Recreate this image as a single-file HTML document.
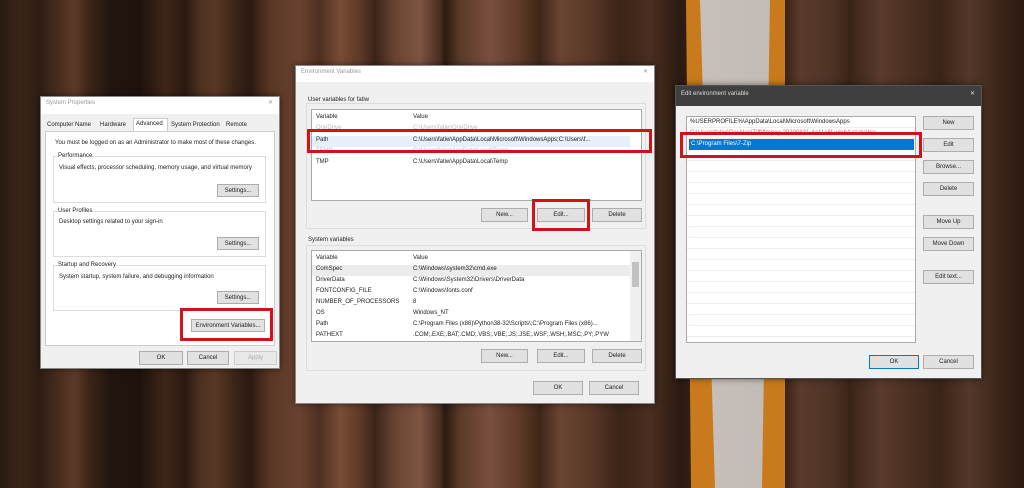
<!DOCTYPE html>
<html><head><meta charset="utf-8"><style>
*{box-sizing:border-box;margin:0;padding:0}
body{width:1024px;height:488px;overflow:hidden;position:relative;font-family:"Liberation Sans",sans-serif;font-size:6px;color:#222;
background:
linear-gradient(90deg,#2a1a12 0,#3a2418 20px,#2e1d14 40px,#4a2e20 60px,#5e3a28 75px,#3a2418 90px,#221510 110px,#1e120c 140px,#3e2618 165px,#2a1a12 185px,#4e3020 200px,#5a3826 215px,#3a2418 235px,#2a1a12 250px,#5a3624 270px,#6a4230 300px,#4e3020 320px,#7a4c36 340px,#5e3a28 360px,#3a2418 375px,#6a4432 395px,#7e5442 420px,#4a2e20 440px,#2a1a12 445px,#5a3a28 460px,#7a5040 490px,#5e3a28 520px,#3e2618 540px,#6a4432 560px,#5a3826 590px,#3a2418 620px,#4a2e20 650px,#2a1a12 680px,#3a2418 700px,
#3a2418 785px,#5a3a2c 800px,#4e3426 830px,#3a2418 850px,#5a3a2c 880px,#4a3022 910px,#3a2418 940px,#54382a 970px,#3a2418 1000px,#2a1a12 1024px);}
.a{position:absolute}
.dlg{position:absolute;background:#f0f0f0;border:1px solid #888;box-shadow:0 0 6px rgba(0,0,0,.5)}
.tb{position:absolute;left:0;right:0;top:0;background:#fff;color:#999;padding:3px 5px;font-size:6px}
.btn{position:absolute;background:#e1e1e1;border:1px solid #adadad;text-align:center;font-size:6px;line-height:12px;color:#222;white-space:nowrap}
.white{position:absolute;background:#fff;border:1px solid #aaa}
.grp{position:absolute;border:1px solid #dcdcdc}
.red{position:absolute;border:3px solid #d0121b}
.t{position:absolute;white-space:nowrap}
</style></head><body>
<div class="a" style="left:0;top:0;width:1024px;height:488px;background:#c97a1c;clip-path:polygon(686px 0,785px 0,785px 488px,691px 488px)"></div>
<div class="a" style="left:0;top:0;width:1024px;height:488px;background:linear-gradient(90deg,#b8b0aa,#d2ccc6,#b4aca6);clip-path:polygon(700px 0,770px 0,762px 488px,715px 488px)"></div>

<!-- System properties -->
<div class="dlg" style="left:40px;top:96px;width:240px;height:273px">
<div class="tb" style="height:17px">System Properties<span style="position:absolute;right:6px;top:2px">✕</span></div>
<div class="t" style="left:6px;top:25px">Computer Name</div>
<div class="t" style="left:59px;top:25px">Hardware</div>
<div class="a" style="left:92px;top:21px;width:35px;height:14px;background:#fff;border:1px solid #ccc;border-bottom:none"></div>
<div class="t" style="left:95px;top:24px">Advanced</div>
<div class="t" style="left:130px;top:25px">System Protection</div>
<div class="t" style="left:185px;top:25px">Remote</div>
<div class="a" style="left:4px;top:34px;width:230px;height:215px;background:#fff;border:1px solid #ccc"></div>
<div class="t" style="left:14px;top:43px">You must be logged on as an Administrator to make most of these changes.</div>
<div class="grp" style="left:12px;top:59px;width:213px;height:47px"></div>
<div class="t" style="left:17px;top:56px;background:#fff">Performance</div>
<div class="t" style="left:18px;top:68px">Visual effects, processor scheduling, memory usage, and virtual memory</div>
<div class="btn" style="left:176px;top:87px;width:42px;height:13px">Settings...</div>
<div class="grp" style="left:12px;top:114px;width:213px;height:46px"></div>
<div class="t" style="left:17px;top:111px;background:#fff">User Profiles</div>
<div class="t" style="left:18px;top:122px">Desktop settings related to your sign-in</div>
<div class="btn" style="left:176px;top:140px;width:42px;height:13px">Settings...</div>
<div class="grp" style="left:12px;top:168px;width:213px;height:46px"></div>
<div class="t" style="left:17px;top:165px;background:#fff">Startup and Recovery</div>
<div class="t" style="left:18px;top:177px">System startup, system failure, and debugging information</div>
<div class="btn" style="left:176px;top:194px;width:42px;height:13px">Settings...</div>
<div class="btn" style="left:150px;top:222px;width:74px;height:13px">Environment Variables...</div>
<div class="red" style="left:139px;top:211px;width:93px;height:33px"></div>
<div class="btn" style="left:98px;top:254px;width:44px;height:14px">OK</div>
<div class="btn" style="left:146px;top:254px;width:42px;height:14px">Cancel</div>
<div class="btn" style="left:193px;top:254px;width:43px;height:14px;color:#aaa;border-color:#ccc;background:#e8e8e8">Apply</div>
</div>

<!-- Environment Variables -->
<div class="dlg" style="left:295px;top:65px;width:360px;height:339px">
<div class="tb" style="height:16px">Environment Variables<span style="position:absolute;right:6px;top:2px">✕</span></div>
<div class="grp" style="left:10px;top:37px;width:340px;height:126px"></div>
<div class="t" style="left:12px;top:31px;background:#f0f0f0">User variables for fatiw</div>
<div class="white" style="left:15px;top:43px;width:331px;height:92px"></div>
<div class="t" style="left:20px;top:48px">Variable</div><div class="t" style="left:117px;top:48px">Value</div>
<div class="t" style="left:20px;top:59px;color:#bbb">OneDrive</div><div class="t" style="left:117px;top:59px;color:#bbb">C:\Users\fatiw\OneDrive</div>
<div class="a" style="left:16px;top:70px;width:318px;height:11px;background:#e5f0fb"></div>
<div class="t" style="left:20px;top:71px">Path</div><div class="t" style="left:117px;top:71px">C:\Users\fatiw\AppData\Local\Microsoft\WindowsApps;C:\Users\f...</div>
<div class="t" style="left:20px;top:82px;color:#bbb">TEMP</div><div class="t" style="left:117px;top:82px;color:#bbb">C:\Users\fatiw\AppData\Local\Temp</div>
<div class="t" style="left:20px;top:93px">TMP</div><div class="t" style="left:117px;top:93px">C:\Users\fatiw\AppData\Local\Temp</div>
<div class="red" style="left:11px;top:63px;width:345px;height:24px"></div>
<div class="btn" style="left:185px;top:142px;width:47px;height:14px">New...</div>
<div class="btn" style="left:241px;top:142px;width:48px;height:14px">Edit...</div>
<div class="btn" style="left:296px;top:142px;width:50px;height:14px">Delete</div>
<div class="red" style="left:236px;top:133px;width:58px;height:32px"></div>
<div class="grp" style="left:10px;top:179px;width:340px;height:126px"></div>
<div class="t" style="left:12px;top:171px;background:#f0f0f0">System variables</div>
<div class="white" style="left:15px;top:184px;width:331px;height:92px"></div>
<div class="a" style="left:334px;top:185px;width:11px;height:90px;background:#f0f0f0"></div>
<div class="a" style="left:336px;top:196px;width:7px;height:25px;background:#c2c2c2"></div>
<div class="a" style="left:16px;top:199px;width:318px;height:11px;background:#ececec"></div>
<div class="t" style="left:20px;top:189px">Variable</div><div class="t" style="left:117px;top:189px">Value</div>
<div class="t" style="left:20px;top:200px">ComSpec</div><div class="t" style="left:117px;top:200px">C:\Windows\system32\cmd.exe</div>
<div class="t" style="left:20px;top:211px">DriverData</div><div class="t" style="left:117px;top:211px">C:\Windows\System32\Drivers\DriverData</div>
<div class="t" style="left:20px;top:222px">FONTCONFIG_FILE</div><div class="t" style="left:117px;top:222px">C:\Windows\fonts.conf</div>
<div class="t" style="left:20px;top:233px">NUMBER_OF_PROCESSORS</div><div class="t" style="left:117px;top:233px">8</div>
<div class="t" style="left:20px;top:244px">OS</div><div class="t" style="left:117px;top:244px">Windows_NT</div>
<div class="t" style="left:20px;top:255px">Path</div><div class="t" style="left:117px;top:255px">C:\Program Files (x86)\Python38-32\Scripts\;C:\Program Files (x86)...</div>
<div class="t" style="left:20px;top:266px">PATHEXT</div><div class="t" style="left:117px;top:266px">.COM;.EXE;.BAT;.CMD;.VBS;.VBE;.JS;.JSE;.WSF;.WSH;.MSC;.PY;.PYW</div>
<div class="btn" style="left:185px;top:283px;width:47px;height:14px">New...</div>
<div class="btn" style="left:241px;top:283px;width:48px;height:14px">Edit...</div>
<div class="btn" style="left:296px;top:283px;width:50px;height:14px">Delete</div>
<div class="btn" style="left:237px;top:315px;width:50px;height:14px">OK</div>
<div class="btn" style="left:293px;top:315px;width:50px;height:14px">Cancel</div>
</div>

<!-- Edit env var -->
<div class="dlg" style="left:675px;top:85px;width:307px;height:294px;border-color:#555">
<div class="tb" style="height:20px;background:#3f3f3f;color:#ddd;padding:5px 5px">Edit environment variable<span style="position:absolute;right:6px;top:4px">✕</span></div>
<div class="white" style="left:10px;top:30px;width:230px;height:227px;background:repeating-linear-gradient(180deg,#fff 0,#fff 10px,#eeeeee 10px,#eeeeee 11px)"></div>
<div class="t" style="left:14px;top:33px">%USERPROFILE%\AppData\Local\Microsoft\WindowsApps</div>
<div class="t" style="left:14px;top:44px;color:#d66">C:\Users\fatiw\Desktop\Tiff\ffmpeg-20200831-4a11a6f-win64-static\bin</div>
<div class="a" style="left:13px;top:53px;width:225px;height:11px;background:#0078d7"></div>
<div class="t" style="left:15px;top:55px;color:#fff">C:\Program Files\7-Zip</div>
<div class="red" style="left:4px;top:46px;width:242px;height:26px"></div>
<div class="btn" style="left:247px;top:30px;width:51px;height:14px">New</div>
<div class="btn" style="left:247px;top:52px;width:51px;height:14px">Edit</div>
<div class="btn" style="left:247px;top:74px;width:51px;height:14px">Browse...</div>
<div class="btn" style="left:247px;top:96px;width:51px;height:14px">Delete</div>
<div class="btn" style="left:247px;top:129px;width:51px;height:14px">Move Up</div>
<div class="btn" style="left:247px;top:151px;width:51px;height:14px">Move Down</div>
<div class="btn" style="left:247px;top:184px;width:51px;height:14px">Edit text...</div>
<div class="btn" style="left:193px;top:269px;width:50px;height:14px;border:1px solid #0078d7">OK</div>
<div class="btn" style="left:247px;top:269px;width:51px;height:14px">Cancel</div>
</div>
</body></html>
